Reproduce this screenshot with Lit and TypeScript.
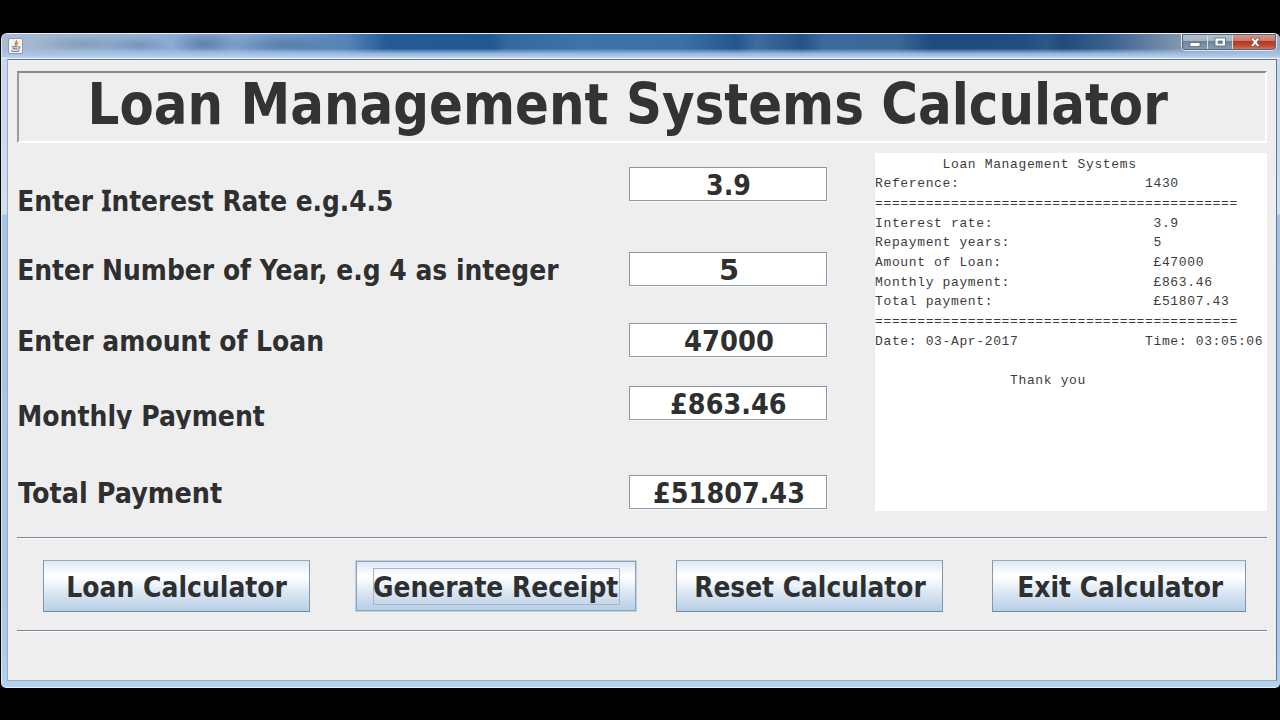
import { LitElement, html, css } from "lit";
import { customElement, property, query } from "lit/decorators.js";

const FAMILY = '"DejaVu Sans"';

/** Bold text condensed or widened so that its visible glyphs span `span` pixels. */
@customElement("fit-text")
class FitText extends LitElement {
  @property() text = "";
  @property({ type: Number }) span = 0;
  @property({ type: Number }) size = 28;
  @query(".inner") inner!: HTMLElement;

  static styles = css`
    :host { display: block; white-space: pre; flex: none; }
    .inner { display: inline-block; transform-origin: 0 50%; vertical-align: top; }
    /* capital I with slab serifs */
    .slab { font-family: "Noto Sans", sans-serif; font-size: 1.02em; line-height: 1; -webkit-text-stroke: .5px currentColor; }
  `;

  updated() {
    const ctx = document.createElement("canvas").getContext("2d")!;
    ctx.font = `bold ${this.size}px ${FAMILY}`;
    const m = ctx.measureText(this.text);
    const left = m.actualBoundingBoxLeft;
    const right = m.width - m.actualBoundingBoxRight;
    const k = this.span / (this.inner.offsetWidth + left - right);
    this.style.width = `${this.span}px`;
    this.inner.style.transform = `translateX(${left * k}px) scaleX(${k})`;
  }

  render() {
    const parts = this.text.split("I");
    return html`<span class="inner">${parts.map((p, i) => (i ? html`<span class="slab">I</span>${p}` : p))}</span>`;
  }
}

interface Field { label: string; labelSpan: number; value: string; valueSpan: number; cls: string; }

const FIELDS: Field[] = [
  { label: "Enter Interest Rate e.g.4.5", labelSpan: 373.5, value: "3.9", valueSpan: 43, cls: "r1" },
  { label: "Enter Number of Year, e.g 4 as integer", labelSpan: 540, value: "5", valueSpan: 16, cls: "r2" },
  { label: "Enter amount of Loan", labelSpan: 303, value: "47000", valueSpan: 88, cls: "r3" },
  { label: "Monthly Payment", labelSpan: 246, value: "£863.46", valueSpan: 114.5, cls: "r4" },
  { label: "Total Payment", labelSpan: 204, value: "£51807.43", valueSpan: 150, cls: "r5" },
];

const BUTTONS = [
  { text: "Loan Calculator", span: 219, cls: "loan" },
  { text: "Generate Receipt", span: 244, cls: "generate" },
  { text: "Reset Calculator", span: 230, cls: "reset" },
  { text: "Exit Calculator", span: 204, cls: "exit" },
];

const row = (a: string, col: number, b: string) => a.padEnd(col) + b;
const RULE = "=".repeat(43);
const RECEIPT = [
  row("", 8, "Loan Management Systems"),
  row("Reference:", 32, "1430"),
  RULE,
  row("Interest rate:", 33, "3.9"),
  row("Repayment years:", 33, "5"),
  row("Amount of Loan:", 33, "£47000"),
  row("Monthly payment:", 33, "£863.46"),
  row("Total payment:", 33, "£51807.43"),
  RULE,
  row("Date: 03-Apr-2017", 32, "Time: 03:05:06"),
  "",
  row("", 16, "Thank you"),
].join("\n");

@customElement("app-root")
class AppRoot extends LitElement {
  static styles = css`
    * { box-sizing: border-box; }
    :host {
      display: block; width: 1280px; height: 720px; overflow: hidden;
      background: #000; padding-top: 33px;
      font-family: "DejaVu Sans", sans-serif; color: #2e2f30;
    }
    .window {
      height: 655px; padding: 0 3px 6px 5px; position: relative;
      border: 1px solid #e6f1fb; border-left-color: #dcebf8; border-right: 0; border-bottom-color: #e4f3fd;
      border-radius: 6px 6px 5px 5px; margin-left: 1px; overflow: hidden;
      background: linear-gradient(#c3d6ec 0, #d0dff0 180px, #a5c3e6 181px, #acc9ea 610px, #b3d2f0 100%);
    }
    .titlebar {
      height: 25px; margin: 0 -3px 0 -5px; padding: 4px 2px 0 6px;
      display: flex; align-items: flex-start; position: relative;
      background:
        linear-gradient(180deg, rgba(190,213,240,0) 0, rgba(190,213,240,0) 58%, rgba(167,195,231,.85) 78%, #b0cbec 92%, #e2eefa 97%),
        radial-gradient(ellipse 34px 13px at 203px 10px, rgba(50,90,138,.5), transparent),
        radial-gradient(ellipse 60px 11px at 285px 11px, rgba(50,88,134,.42), transparent),
        radial-gradient(ellipse 50px 9px at 80px 10px, rgba(80,108,140,.3), transparent),
        radial-gradient(ellipse 34px 9px at 136px 11px, rgba(70,100,136,.34), transparent),
        linear-gradient(90deg, #a9bcd2 0, #9eb5cf 60px, #91b0d4 130px, #84a7d0 220px, #6c95c5 300px, #5584b8 345px, #245b96 385px, #225994 490px, #33699f 505px, #3b73aa 580px, #3a70a7 680px, #24568e 735px, #3d6d9f 755px, #235288 800px, #3a6a9e 822px, #3b6898 895px, #1d4b7f 930px, #204e82 1020px, #2b5888 1045px, #204a7c 1060px, #3c6490 1110px, #8197b0 1178px, #93aecf 1279px);
    }
    .java { flex: none; width: 15px; height: 16px; }
    .caption {
      position: absolute; left: 1179px; top: -1px; height: 18px; width: 96px; display: flex;
      border: 1px solid #dce6ef; border-top: 0; border-radius: 0 0 5px 5px; overflow: hidden;
      outline: 1px solid #53687f; outline-offset: -2px;
    }
    .cap { height: 17px; display: flex; align-items: center; justify-content: center; border-right: 1px solid #d5dfe8; }
    .cap svg { display: block; }
    .min, .max { width: 26px; background: linear-gradient(#b9c6d3 0, #a2b2c2 48%, #6f849b 50%, #899cb1 100%); }
    .max { width: 25px; }
    .close { flex: 1; border-right: 0; background: linear-gradient(#dba191 0, #cc7867 46%, #b03a25 50%, #bf4c32 75%, #d58164 100%); }
    .client {
      height: 622px; background: #eeeeee; border: 1px solid #5e7795; border-left-color: #9aa9bb; border-bottom-color: #9fabb8;
      padding: 11px 9px 0 9px;
      display: flex; flex-direction: column;
    }
    .heading {
      flex: none; width: 1250px; height: 72px; display: flex; justify-content: flex-start; padding-left: 73px;
      border: 2px solid; border-color: #8a8a8a #fff #fff #9a9a9a;
      font-size: 57px; font-weight: 700; line-height: 62px; color: #333;
    }
    .main { flex: none; display: flex; height: 394px; width: 1250px; }
    .form { width: 858px; padding-top: 24px; font-size: 28px; font-weight: 700; line-height: 36px; }
    .field { display: grid; grid-template-columns: 612px 198px; align-items: start; }
    .label { height: 38px; padding: 1px 0 0 2px; }
    .value { height: 34px; background: #fff; border: 1px solid #8795a5; border-bottom-color: #929daa;
      box-shadow: 1px 1px 0 #f8f9fa; display: flex; justify-content: center; line-height: 34px; padding: 1px 0 0 1px; }
    .value fit-text { height: 31px; }
    .r1 { height: 85px; } .r1 .label { margin-top: 16px; }
    .r2 { height: 71px; }
    .r3 { height: 63px; }
    .r4 { height: 89px; } .r4 .label { margin-top: 12px; height: 31px; overflow: hidden; }
    .r5 .label { padding-left: 1px; }
    .receipt {
      margin: 10px 0 0; width: 392px; height: 358px; background: #fff; color: #3c3c3c; padding-top: 1.5px;
      font: 13px/19.7px "Liberation Mono", monospace; letter-spacing: .638px; white-space: pre; overflow: hidden;
    }
    .actions {
      flex: none; width: 1250px; height: 94px; border-top: 1px solid #73879d; border-bottom: 1px solid #73879d;
      box-shadow: 0 1px 0 #fafcff, inset 0 1px 0 #fafcff;
      padding: 22px 0 0 26px; display: flex;
    }
    .btn {
      flex: none; height: 52px; border: 1px solid #8496aa; border-color: #99a9b9 #8496aa #7389a2 #8496aa; padding: 0; margin: 0;
      background: linear-gradient(#dde8f3 0, #fff 29%, #fdfeff 34%, #dce7f3 62%, #b8cfe5 100%);
      display: flex; align-items: center; justify-content: center;
      font: 700 28px/39px "DejaVu Sans", sans-serif; color: #2e2f30;
    }
    .loan { width: 267px; padding-left: 2px; }
    .generate { width: 282px; margin-left: 45px; border: 2px solid #8ba3ba; outline: 1px solid #bfd0e0; outline-offset: -1px; }
    .reset { width: 267px; margin-left: 39px; padding-left: 3px; }
    .exit { width: 254px; margin-left: 49px; padding-left: 3px; }
    .focus { height: 37px; display: block; }
    .generate .focus { border: 1px solid #a3b8cc; width: 247px; line-height: 37px; }
  `;

  render() {
    return html`
      <div class="window">
        <div class="titlebar">
          <svg class="java" viewBox="0 0 15 16">
            <rect x=".5" y=".5" width="14" height="15" rx="1.5" fill="#f1f3f4" stroke="#8d99a8" />
            <path d="M8.300 2.200C9.400 4 5.700 5 7.600 7.700M10 4.200C8.200 5.200 8.300 6 9 7.600" fill="none" stroke="#d8702a" stroke-width="1.2" />
            <path d="M3.800 8.800h5.800M4.600 10.800h4.600M3 12.800c3 1 6.500 .8 8.500-.3M10.200 8.900c2.500-.8 2.300 1.800-.5 2.400" fill="none" stroke="#4a6176" stroke-width="1" />
          </svg>
          <div class="caption">
            <div class="cap min">
              <svg width="14" height="14" viewBox="0 0 14 14"><rect x="2" y="7.500" width="10" height="4" fill="#fff" stroke="#5c6877" stroke-width=".8" /></svg>
            </div>
            <div class="cap max">
              <svg width="14" height="14" viewBox="0 0 14 14"><path d="M2 3h10.500v8H2zM5.200 6v2.300h4V6z" fill="#f6f8fa" fill-rule="evenodd" stroke="#5c6877" stroke-width=".8" /></svg>
            </div>
            <div class="cap close">
              <svg width="14" height="14" viewBox="0 0 14 14"><path d="M2.500 3h3L7.200 5.200 9 3h3L9 7.200l3 4.300H9L7.200 9.200 5.500 11.500h-3l3-4.300z" fill="#fff" stroke="#6b4a4b" stroke-width=".7" /></svg>
            </div>
          </div>
        </div>
        <div class="client">
          <div class="heading">
            <fit-text .text=${"Loan Management Systems Calculator"} .span=${1076} .size=${57}></fit-text>
          </div>
          <div class="main">
            <div class="form">
              ${FIELDS.map((f) => html`
                <div class="field ${f.cls}">
                  <div class="label"><fit-text .text=${f.label} .span=${f.labelSpan}></fit-text></div>
                  <div class="value"><fit-text .text=${f.value} .span=${f.valueSpan}></fit-text></div>
                </div>`)}
            </div>
            <pre class="receipt">${RECEIPT}</pre>
          </div>
          <div class="actions">
            ${BUTTONS.map((b) => html`
              <button class="btn ${b.cls}">
                <span class="focus"><fit-text .text=${b.text} .span=${b.span}></fit-text></span>
              </button>`)}
          </div>
        </div>
      </div>
    `;
  }
}
